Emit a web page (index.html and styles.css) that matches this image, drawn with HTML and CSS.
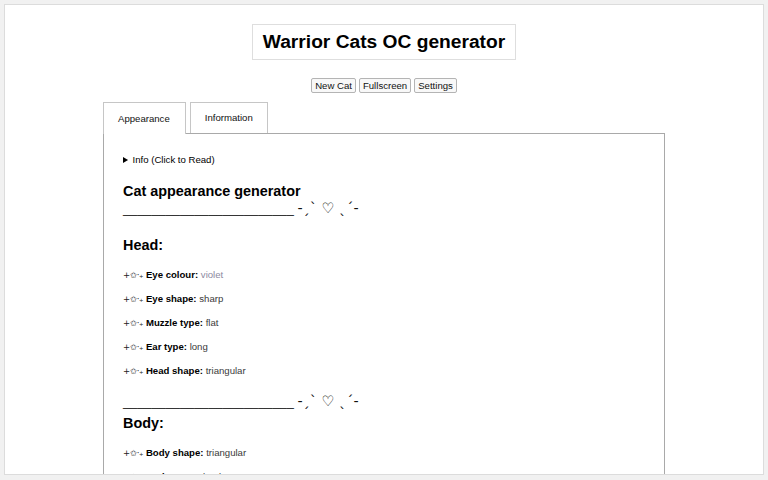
FILE: index.html
```html
<!DOCTYPE html>
<html lang="en">
<head>
<meta charset="utf-8">
<title>Warrior Cats OC generator</title>
<link rel="stylesheet" href="styles.css">
</head>
<body>
<div class="frame">
  <header class="top">
    <h1 class="title">Warrior Cats OC generator</h1>
    <div class="buttons">
      <button class="btn">New Cat</button>
      <button class="btn">Fullscreen</button>
      <button class="btn">Settings</button>
    </div>
  </header>
  <main class="tabs-wrap">
    <div class="tabs">
      <div class="tab active">Appearance</div>
      <div class="tab">Information</div>
    </div>
    <section class="panel">
      <details class="info">
        <summary>Info (Click to Read)</summary>
      </details>
      <h2 class="gen-title">Cat appearance generator</h2>
      <div class="divider">________________________ <span class="deco">-ˏˋ ♡ ˎˊ-</span></div>
      <h3 class="section first">Head:</h3>
      <ul class="traits">
        <li><span class="star">+✩‧₊</span> <b>Eye colour:</b> <span class="val violet">violet</span></li>
        <li><span class="star">+✩‧₊</span> <b>Eye shape:</b> <span class="val">sharp</span></li>
        <li><span class="star">+✩‧₊</span> <b>Muzzle type:</b> <span class="val">flat</span></li>
        <li><span class="star">+✩‧₊</span> <b>Ear type:</b> <span class="val">long</span></li>
        <li><span class="star">+✩‧₊</span> <b>Head shape:</b> <span class="val">triangular</span></li>
      </ul>
      <div class="divider second">________________________ <span class="deco">-ˏˋ ♡ ˎˊ-</span></div>
      <h3 class="section">Body:</h3>
      <ul class="traits body">
        <li><span class="star">+✩‧₊</span> <b>Body shape:</b> <span class="val">triangular</span></li>
        <li><span class="star">+✩‧₊</span> <b>Body type:</b> <span class="val">slender</span></li>
        <li><span class="star">+✩‧₊</span> <b>Tail type:</b> <span class="val">long</span></li>
      </ul>
    </section>
  </main>
</div>
</body>
</html>
```

FILE: styles.css
```css
html, body {
  margin: 0;
  padding: 0;
}

body {
  background: #f1f1f1;
  font-family: "Liberation Sans", Arial, "DejaVu Sans", sans-serif;
  color: #000;
}

.frame {
  margin: 4px;
  width: 758px;
  height: 469px;
  border: 1px solid #dcdcdc;
  background: #fff;
  overflow: hidden;
}

.top {
  display: flex;
  flex-direction: column;
  align-items: center;
  padding-top: 19px;
}

.title {
  margin: 0;
  font-size: 19.2px;
  line-height: 22px;
  font-weight: bold;
  padding: 6px 10px;
  border: 1px solid #dedede;
}

.buttons {
  display: flex;
  gap: 3px;
  margin-top: 18px;
}

.btn {
  font-family: "Liberation Sans", Arial, sans-serif;
  font-size: 9.6px;
  line-height: 11px;
  padding: 1px 3px;
  border: 1px solid #b4b4b4;
  border-radius: 2px;
  background: #f8f8f8;
  color: #111;
}

.tabs-wrap {
  width: 562px;
  margin: 9px auto 0;
}

.tabs {
  display: flex;
  gap: 4px;
  align-items: flex-end;
}

.tab {
  font-size: 9.6px;
  line-height: 12px;
  height: 30px;
  padding: 0 15px 0 14px;
  display: flex;
  align-items: center;
  border: 1px solid #c6c6c6;
  border-bottom: none;
  color: #111;
  background: #fff;
}

.tab + .tab {
  padding: 0 14px;
}

.tab.active {
  height: 31px;
  margin-bottom: -1px;
  position: relative;
  z-index: 1;
}

.panel {
  border: 1px solid #a9a9a9;
  padding: 20px 19px 40px;
}

.info summary {
  font-size: 9.6px;
  line-height: 12px;
  cursor: pointer;
}

.info summary::marker {
  font-size: 9px;
}

.gen-title {
  margin: 17px 0 0;
  font-size: 14.4px;
  line-height: 17px;
  font-weight: bold;
}

.divider {
  margin-top: 1px;
  font-size: 12.8px;
  line-height: 15px;
  height: 15px;
  color: #111;
  white-space: nowrap;
}

.divider.second {
  margin-top: 17px;
}

.deco {
  font-family: "DejaVu Sans", sans-serif;
  font-size: 14.4px;
  line-height: 0;
}

.section {
  margin: 6px 0 0;
  font-size: 14.4px;
  line-height: 17px;
  font-weight: bold;
}

.section.first {
  margin-top: 21px;
}

.traits {
  list-style: none;
  margin: 0;
  padding: 15px 0 0;
  display: flex;
  flex-direction: column;
  gap: 12px;
}

.traits.body {
  padding-top: 15px;
}

.traits li {
  font-size: 9.6px;
  line-height: 12px;
  height: 12px;
  color: #222;
}

.traits b {
  color: #000;
}

.star {
  font-family: "DejaVu Sans", sans-serif;
  font-size: 8.5px;
  line-height: 0;
  letter-spacing: -0.3px;
}

.val {
  color: #3a3a3a;
}

.val.violet {
  color: #8d8b9f;
}
```
